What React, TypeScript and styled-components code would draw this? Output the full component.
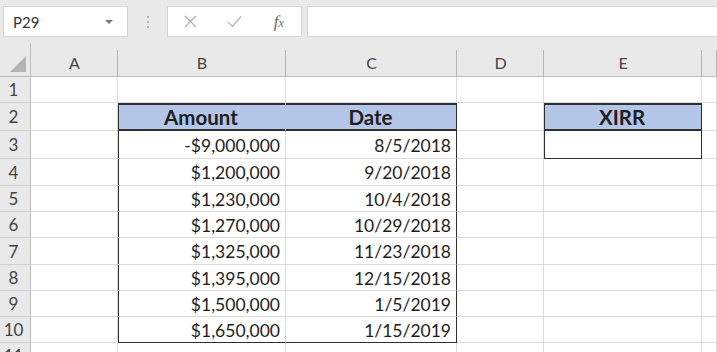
import styled, { createGlobalStyle } from "styled-components";

const GlobalStyle = createGlobalStyle`
  html, body {
    margin: 0;
    padding: 0;
    background: #ffffff;
  }
  body {
    font-family: Lato, "Noto Sans", sans-serif;
  }
`;

const DARK = "#2f2f2f";
const GRID = "#dadada";
const FILL = "#b4c6e7";

const columns = ["A", "B", "C", "D", "E"];

type Edge = { t?: number; r?: boolean; b?: number; l?: boolean };

type CellSpec = {
  text?: string;
  head?: boolean;
  align?: "left" | "right" | "center";
  box?: Edge;
};

const rows: { n: number; cells: CellSpec[] }[] = [
  { n: 1, cells: [{}, {}, {}, {}, {}] },
  {
    n: 2,
    cells: [
      {},
      { text: "Amount", head: true, box: { t: 2, b: 2, l: true } },
      { text: "Date", head: true, box: { t: 2, b: 2, r: true } },
      {},
      { text: "XIRR", head: true, box: { t: 2, b: 2, l: true, r: true } },
    ],
  },
  {
    n: 3,
    cells: [
      {},
      { text: "-$9,000,000", align: "right", box: { l: true } },
      { text: "8/5/2018", align: "right", box: { r: true } },
      {},
      { box: { l: true, r: true, b: 1 } },
    ],
  },
  ...[
    ["$1,200,000", "9/20/2018"],
    ["$1,230,000", "10/4/2018"],
    ["$1,270,000", "10/29/2018"],
    ["$1,325,000", "11/23/2018"],
    ["$1,395,000", "12/15/2018"],
    ["$1,500,000", "1/5/2019"],
    ["$1,650,000", "1/15/2019"],
  ].map(([amount, date], i) => {
    const last = i === 6;
    return {
      n: i + 4,
      cells: [
        {},
        { text: amount, align: "right" as const, box: { l: true, b: last ? 1 : 0 } },
        { text: date, align: "right" as const, box: { r: true, b: last ? 1 : 0 } },
        {},
        {},
      ],
    };
  }),
  { n: 11, cells: [{}, {}, {}, {}, {}] },
];

const Page = styled.div`
  width: 717px;
  height: 352px;
  overflow: hidden;
  display: flex;
  flex-direction: column;
  background: #e9e9e9;
`;

const Toolbar = styled.div`
  height: 43px;
  flex: none;
  display: flex;
  align-items: flex-start;
  padding: 6px 0 0 3px;
  box-sizing: border-box;
`;

const Field = styled.div`
  height: 31px;
  box-sizing: border-box;
  background: #ffffff;
  border: 1px solid #d4d4d4;
  display: flex;
  align-items: center;
`;

const NameBox = styled(Field)`
  width: 125px;
  padding: 0 14px 0 9px;
  justify-content: space-between;
  font-size: 15px;
  color: #333333;
`;

const Caret = styled.span`
  width: 0;
  height: 0;
  border-left: 4px solid transparent;
  border-right: 4px solid transparent;
  border-top: 4px solid #7a7a7a;
`;

const Grip = styled.div`
  width: 39px;
  height: 31px;
  display: flex;
  flex-direction: column;
  align-items: center;
  justify-content: center;
  gap: 3px;

  span {
    width: 2px;
    height: 2px;
    background: #b5b5b5;
  }
`;

const FxGroup = styled(Field)`
  width: 135px;
`;

const FxSlot = styled.span<{ $tone: string }>`
  width: 46px;
  display: flex;
  justify-content: center;
  align-items: center;
  color: ${({ $tone }) => $tone};
`;

const FxText = styled.span`
  font-family: "Liberation Serif", serif;
  font-style: italic;
  font-size: 17px;
  color: #6b6b6b;

  sub {
    font-size: 12px;
    vertical-align: 0;
  }
`;

const FormulaInput = styled(Field)`
  flex: 1;
  margin-left: 5px;
  border-right: none;
`;

const Sheet = styled.div`
  flex: 1;
  display: grid;
  grid-template-columns: 31px 87px 168px 171px 87px 158px 1fr;
  grid-template-rows: 34px 26px 28px 28px 27px 26px 26px 27px 26px 26px 26px 26px;
  background: #ffffff;
`;

const Corner = styled.div`
  background: #e9e9e9;
  border-right: 1px solid #bdbdbd;
  border-bottom: 1px solid #bdbdbd;
  position: relative;

  &::after {
    content: "";
    position: absolute;
    right: 4px;
    bottom: 4px;
    width: 0;
    height: 0;
    border-left: 16px solid transparent;
    border-bottom: 16px solid #b4b4b4;
  }
`;

const ColHead = styled.div`
  background: #e9e9e9;
  border-bottom: 1px solid #bdbdbd;
  position: relative;
  display: flex;
  align-items: center;
  justify-content: center;
  padding-top: 6px;
  font-size: 16px;
  color: #444444;

  &::after {
    content: "";
    position: absolute;
    right: 0;
    top: 7px;
    bottom: 0;
    width: 1px;
    background: #b4b4b4;
  }
`;

const RowHead = styled.div`
  background: #e9e9e9;
  border-right: 1px solid #bdbdbd;
  border-bottom: 1px solid #d0d0d0;
  display: flex;
  align-items: center;
  justify-content: center;
  padding-right: 3px;
  font-size: 17px;
  color: #444444;
`;

const Cell = styled.div<{ $head?: boolean; $align?: string; $box?: Edge }>`
  border-right: 1px solid
    ${({ $box, $head }) => ($box?.r ? DARK : $head ? FILL : GRID)};
  border-bottom: 1px solid ${({ $box }) => ($box?.b ? DARK : GRID)};
  background: ${({ $head }) => ($head ? FILL : "#ffffff")};
  display: flex;
  align-items: center;
  justify-content: ${({ $align, $head }) =>
    $head ? "center" : $align === "right" ? "flex-end" : "flex-start"};
  padding: 1px 5px 0 4px;
  font-size: ${({ $head }) => ($head ? "20.5px" : "17.5px")};
  font-weight: ${({ $head }) => ($head ? 700 : 400)};
  color: #1e1e1e;
  white-space: nowrap;
  box-shadow: ${({ $box }) => {
    const s: string[] = [];
    if ($box?.l) s.push(`inset 1px 0 0 ${DARK}`);
    if ($box?.t) s.push(`inset 0 ${$box.t}px 0 ${DARK}`);
    if ($box?.b && $box.b > 1) s.push(`inset 0 -${$box.b - 1}px 0 ${DARK}`);
    return s.length ? s.join(", ") : "none";
  }};
`;

export default function App() {
  return (
    <>
      <GlobalStyle />
      <Page>
        <Toolbar>
          <NameBox>
            <span>P29</span>
            <Caret />
          </NameBox>
          <Grip>
            <span />
            <span />
            <span />
          </Grip>
          <FxGroup>
            <FxSlot $tone="#b0b0b0">
              <svg width="13" height="13" viewBox="0 0 13 13">
                <path d="M1 1 L12 12 M12 1 L1 12" stroke="currentColor" strokeWidth="1.3" fill="none" />
              </svg>
            </FxSlot>
            <FxSlot $tone="#b8b8b8">
              <svg width="15" height="13" viewBox="0 0 15 13">
                <path d="M1 7 L5.5 11.5 L14 1.5" stroke="currentColor" strokeWidth="1.4" fill="none" />
              </svg>
            </FxSlot>
            <FxSlot $tone="#6b6b6b">
              <FxText>
                f<sub>x</sub>
              </FxText>
            </FxSlot>
          </FxGroup>
          <FormulaInput />
        </Toolbar>
        <Sheet>
          <Corner />
          {columns.map((c) => (
            <ColHead key={c}>{c}</ColHead>
          ))}
          <ColHead />
          {rows.map((row) => (
            <Row key={row.n} n={row.n} cells={row.cells} />
          ))}
        </Sheet>
      </Page>
    </>
  );
}

function Row({ n, cells }: { n: number; cells: CellSpec[] }) {
  return (
    <>
      <RowHead>{n}</RowHead>
      {cells.map((c, i) => (
        <Cell key={i} $head={c.head} $align={c.align} $box={c.box}>
          {c.text}
        </Cell>
      ))}
      <Cell />
    </>
  );
}
